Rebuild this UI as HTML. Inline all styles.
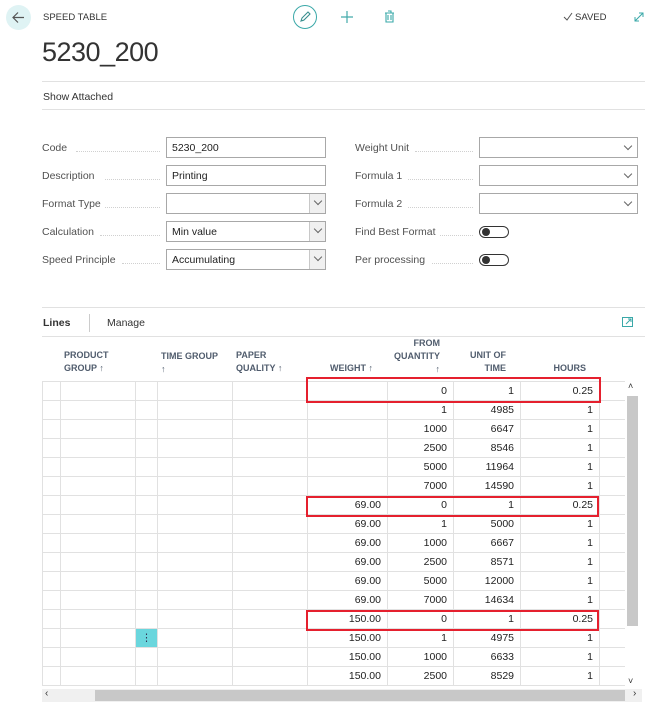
<!DOCTYPE html>
<html><head><meta charset="utf-8"><style>
*{box-sizing:border-box;margin:0;padding:0}
body{width:645px;height:702px;background:#fff;font-family:"Liberation Sans",sans-serif;color:#212121;position:relative;overflow:hidden;font-size:11px}
.a{position:absolute}
.hl{position:absolute;left:42px;right:0;height:1px;background:#e1e1e1}
.lbl{position:absolute;font-size:10.5px;color:#505050}
.dots{position:absolute;height:1px;border-top:1px dotted #d0d0d0}
.inp{position:absolute;height:21px;border:1px solid #a8a8a8;background:#fff;font-size:10.5px;padding:4px 5px;color:#212121}
.dd{position:absolute;right:0;top:0;width:16px;height:19px;background:#f0f0f0;border-left:1px solid #c8c8c8}
.chev{position:absolute;right:6px;top:5px;width:6px;height:6px;border-right:1px solid #666;border-bottom:1px solid #666;transform:rotate(45deg)}
.tog{position:absolute;width:30px;height:12px;border:1px solid #333;border-radius:7px}
.tog:after{content:"";position:absolute;left:2px;top:1px;width:8px;height:8px;border-radius:50%;background:#333}
.th{position:absolute;font-size:9px;color:#505c6d;font-weight:bold;line-height:13px}
table{position:absolute;left:42px;top:381px;border-collapse:collapse;table-layout:fixed;width:585px}
td{border:1px solid #e1e1e1;height:19px;font-size:10.5px;text-align:right;padding:0 6px;color:#212121;overflow:hidden}
.red{position:absolute;border:2px solid #e5202e}
</style></head><body>
<div class="a" style="left:6px;top:5px;width:25px;height:25px;border-radius:50%;background:#dff3f4"></div>
<svg class="a" style="left:11px;top:10px" width="15" height="15" viewBox="0 0 15 15"><path d="M13 7.5H2M7 2.5L2 7.5L7 12.5" stroke="#555" stroke-width="1.2" fill="none"/></svg>
<div class="a" style="left:43px;top:12px;font-size:9.5px;color:#333">SPEED TABLE</div>
<div class="a" style="left:293px;top:5px;width:24px;height:24px;border-radius:50%;border:1.5px solid #3aa8a8"></div>
<svg class="a" style="left:298px;top:10px" width="14" height="14" viewBox="0 0 14 14"><path d="M3 11L4 8L10 2L12 4L6 10Z M3 11L5.5 10.3" stroke="#3a8f8f" stroke-width="1.1" fill="none"/></svg>
<svg class="a" style="left:340px;top:10px" width="14" height="14"><path d="M7 1V13M1 7H13" stroke="#4aa" stroke-width="1.2"/></svg>
<svg class="a" style="left:384px;top:10px" width="11" height="13"><path d="M1 3H10M4 1H7V3M2 3V12H9V3M4 5V10M7 5V10" stroke="#3aa8a8" stroke-width="1.1" fill="none"/></svg>
<svg class="a" style="left:563px;top:12px" width="10" height="9"><path d="M1 5L4 8L9 1" stroke="#555" fill="none"/></svg>
<div class="a" style="left:575px;top:12px;font-size:9.5px;color:#333">SAVED</div>
<svg class="a" style="left:633px;top:11px" width="12" height="12"><path d="M2 10L10 2M2 6V10H6M6 2H10V6" stroke="#3aa8a8" fill="none"/></svg>
<div class="a" style="left:42px;top:37px;font-size:27px;color:#333;letter-spacing:-0.5px">5230_200</div>
<div class="hl" style="top:81px"></div>
<div class="a" style="left:43px;top:91px;font-size:10.5px;color:#333">Show Attached</div>
<div class="hl" style="top:109px"></div>

<div class="lbl" style="left:42px;top:142px">Code</div><div class="dots" style="left:76px;width:84px;top:151px"></div>
<div class="inp" style="left:166px;top:137px;width:160px">5230_200</div>
<div class="lbl" style="left:42px;top:170px">Description</div><div class="dots" style="left:105px;width:55px;top:179px"></div>
<div class="inp" style="left:166px;top:165px;width:160px">Printing</div>
<div class="lbl" style="left:42px;top:198px">Format Type</div><div class="dots" style="left:105px;width:55px;top:207px"></div>
<div class="inp" style="left:166px;top:193px;width:160px"><div class="dd"><div class="chev" style="right:4px;top:4px"></div></div></div>
<div class="lbl" style="left:42px;top:226px">Calculation</div><div class="dots" style="left:100px;width:60px;top:235px"></div>
<div class="inp" style="left:166px;top:221px;width:160px">Min value<div class="dd"><div class="chev" style="right:4px;top:4px"></div></div></div>
<div class="lbl" style="left:42px;top:254px">Speed Principle</div><div class="dots" style="left:122px;width:38px;top:263px"></div>
<div class="inp" style="left:166px;top:249px;width:160px">Accumulating<div class="dd"><div class="chev" style="right:4px;top:4px"></div></div></div>

<div class="lbl" style="left:355px;top:142px">Weight Unit</div><div class="dots" style="left:415px;width:58px;top:151px"></div>
<div class="inp" style="left:479px;top:137px;width:159px"><div class="chev"></div></div>
<div class="lbl" style="left:355px;top:170px">Formula 1</div><div class="dots" style="left:408px;width:65px;top:179px"></div>
<div class="inp" style="left:479px;top:165px;width:159px"><div class="chev"></div></div>
<div class="lbl" style="left:355px;top:198px">Formula 2</div><div class="dots" style="left:408px;width:65px;top:207px"></div>
<div class="inp" style="left:479px;top:193px;width:159px"><div class="chev"></div></div>
<div class="lbl" style="left:355px;top:226px">Find Best Format</div><div class="dots" style="left:440px;width:33px;top:235px"></div>
<div class="tog" style="left:479px;top:226px"></div>
<div class="lbl" style="left:355px;top:254px">Per processing</div><div class="dots" style="left:432px;width:41px;top:263px"></div>
<div class="tog" style="left:479px;top:254px"></div>

<div class="hl" style="top:307px"></div>
<div class="a" style="left:43px;top:317px;font-size:10.5px;font-weight:bold;color:#333">Lines</div>
<div class="a" style="left:89px;top:314px;width:1px;height:18px;background:#ccc"></div>
<div class="a" style="left:107px;top:317px;font-size:10.5px;color:#333">Manage</div>
<svg class="a" style="left:622px;top:317px" width="11" height="10"><rect x="0.5" y="0.5" width="10" height="9" stroke="#3aa8a8" fill="none"/><path d="M4 7L9 2M6 2H9V5" stroke="#3aa8a8" fill="none"/></svg>
<div class="hl" style="top:336px"></div>

<div class="th" style="left:64px;top:349px">PRODUCT<br>GROUP ↑</div>
<div class="th" style="left:161px;top:350px">TIME GROUP<br>↑</div>
<div class="th" style="left:236px;top:349px">PAPER<br>QUALITY ↑</div>
<div class="th" style="left:330px;top:362px">WEIGHT ↑</div>
<div class="th" style="left:390px;top:337px;width:50px;text-align:right">FROM<br>QUANTITY<br>↑</div>
<div class="th" style="left:460px;top:349px;width:46px;text-align:right">UNIT OF<br>TIME</div>
<div class="th" style="left:540px;top:362px;width:46px;text-align:right">HOURS</div>

<table>
<colgroup><col style="width:18px"><col style="width:75px"><col style="width:22px"><col style="width:75px"><col style="width:75px"><col style="width:80px"><col style="width:66px"><col style="width:67px"><col style="width:79px"><col style="width:28px"></colgroup>
<tr><td></td><td></td><td></td><td></td><td></td><td></td><td>0</td><td>1</td><td>0.25</td><td></td></tr>
<tr><td></td><td></td><td></td><td></td><td></td><td></td><td>1</td><td>4985</td><td>1</td><td></td></tr>
<tr><td></td><td></td><td></td><td></td><td></td><td></td><td>1000</td><td>6647</td><td>1</td><td></td></tr>
<tr><td></td><td></td><td></td><td></td><td></td><td></td><td>2500</td><td>8546</td><td>1</td><td></td></tr>
<tr><td></td><td></td><td></td><td></td><td></td><td></td><td>5000</td><td>11964</td><td>1</td><td></td></tr>
<tr><td></td><td></td><td></td><td></td><td></td><td></td><td>7000</td><td>14590</td><td>1</td><td></td></tr>
<tr><td></td><td></td><td></td><td></td><td></td><td>69.00</td><td>0</td><td>1</td><td>0.25</td><td></td></tr>
<tr><td></td><td></td><td></td><td></td><td></td><td>69.00</td><td>1</td><td>5000</td><td>1</td><td></td></tr>
<tr><td></td><td></td><td></td><td></td><td></td><td>69.00</td><td>1000</td><td>6667</td><td>1</td><td></td></tr>
<tr><td></td><td></td><td></td><td></td><td></td><td>69.00</td><td>2500</td><td>8571</td><td>1</td><td></td></tr>
<tr><td></td><td></td><td></td><td></td><td></td><td>69.00</td><td>5000</td><td>12000</td><td>1</td><td></td></tr>
<tr><td></td><td></td><td></td><td></td><td></td><td>69.00</td><td>7000</td><td>14634</td><td>1</td><td></td></tr>
<tr><td></td><td></td><td></td><td></td><td></td><td>150.00</td><td>0</td><td>1</td><td>0.25</td><td></td></tr>
<tr><td></td><td></td><td style="background:#6ad6dd;text-align:center;color:#335;padding:0">⋮</td><td></td><td></td><td>150.00</td><td>1</td><td>4975</td><td>1</td><td></td></tr>
<tr><td></td><td></td><td></td><td></td><td></td><td>150.00</td><td>1000</td><td>6633</td><td>1</td><td></td></tr>
<tr><td></td><td></td><td></td><td></td><td></td><td>150.00</td><td>2500</td><td>8529</td><td>1</td><td></td></tr>
</table>
<div class="red" style="left:306px;top:377px;width:295px;height:26px"></div>
<div class="red" style="left:306px;top:496px;width:293px;height:21px"></div>
<div class="red" style="left:306px;top:610px;width:293px;height:21px"></div>
<div class="a" style="left:625px;top:380px;width:14px;height:310px;background:#fff"></div>
<div class="a" style="left:627px;top:396px;width:11px;height:230px;background:#c8c8c8"></div>
<div class="a" style="left:628px;top:381px;font-size:9px;color:#333">˄</div>
<div class="a" style="left:628px;top:676px;font-size:9px;color:#333">˅</div>
<div class="a" style="left:42px;top:689px;width:600px;height:13px;background:#f0f0f0"></div>
<div class="a" style="left:95px;top:690px;width:530px;height:11px;background:#c8c8c8"></div>
<div class="a" style="left:45px;top:688px;font-size:10px;color:#333">‹</div>
<div class="a" style="left:633px;top:688px;font-size:10px;color:#333">›</div>
</body></html>
